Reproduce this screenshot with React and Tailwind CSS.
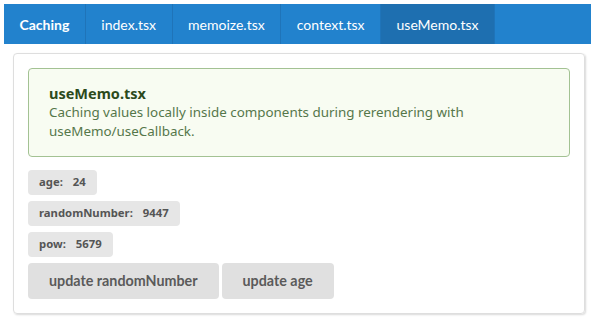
import React, { useState } from "react";

const tabs = ["index.tsx", "memoize.tsx", "context.tsx", "useMemo.tsx"];

const Badge = ({ label, value }) => (
  <div className="self-start h-[25px] px-[11px] rounded-[4px] bg-[#e6e6e6] flex items-center gap-[10px] text-[11.3px] font-bold text-[#555]">
    <span>{label}:</span>
    <span>{value}</span>
  </div>
);

const App = () => {
  const [age, setAge] = useState(24);
  const [randomNumber, setRandomNumber] = useState(9447);

  return (
    <div className="w-[595px] h-[322px] bg-white pt-1 font-['Lato',sans-serif]">
      {/* Nav */}
      <div className="mx-1 h-10 bg-[#2282cd] flex text-white text-[14px]">
        <div className="px-[15.5px] flex items-center font-bold border-r border-[#1f74b9]">
          Caching
        </div>
        {tabs.map((t) => (
          <div
            key={t}
            className={`px-[15.5px] flex items-center border-r border-[#1f74b9] ${
              t === "useMemo.tsx" ? "bg-[#1e6fb0]" : ""
            }`}
          >
            {t}
          </div>
        ))}
      </div>

      {/* Card */}
      <div className="mt-[9px] ml-[13px] w-[572px] rounded-[4px] border border-[#dedede] shadow-[1px_1px_2px_rgba(0,0,0,0.15)] p-[14px] flex flex-col gap-[6px]">
        <div className="mb-[7px] h-[89px] rounded-[4px] border border-[#a3c293] bg-[#f8fcf2] px-5 pt-[14px] font-['Noto_Sans',sans-serif]">
          <h3 className="text-[14.5px] font-bold text-[#2c4a1c] leading-[20px]">
            useMemo.tsx
          </h3>
          <p className="text-[13.4px] leading-[19px] text-[#55774a]">
            Caching values locally inside components during rerendering with
            <br />
            useMemo/useCallback.
          </p>
        </div>

        <div className="flex flex-col gap-[6px] font-['Noto_Sans',sans-serif]">
          <Badge label="age" value={age} />
          <Badge label="randomNumber" value={randomNumber} />
          <Badge label="pow" value={5679} />
        </div>

        <div className="flex gap-[3px]">
          <button
            onClick={() => setRandomNumber(Math.floor(Math.random() * 10000))}
            className="h-9 px-[21px] rounded-[4px] bg-[#e0e0e0] text-[14.3px] font-bold text-[#5a5a5a]"
          >
            update randomNumber
          </button>
          <button
            onClick={() => setAge(age + 1)}
            className="h-9 px-[21px] rounded-[4px] bg-[#e0e0e0] text-[14.3px] font-bold text-[#5a5a5a]"
          >
            update age
          </button>
        </div>
      </div>
    </div>
  );
};

export default App;
